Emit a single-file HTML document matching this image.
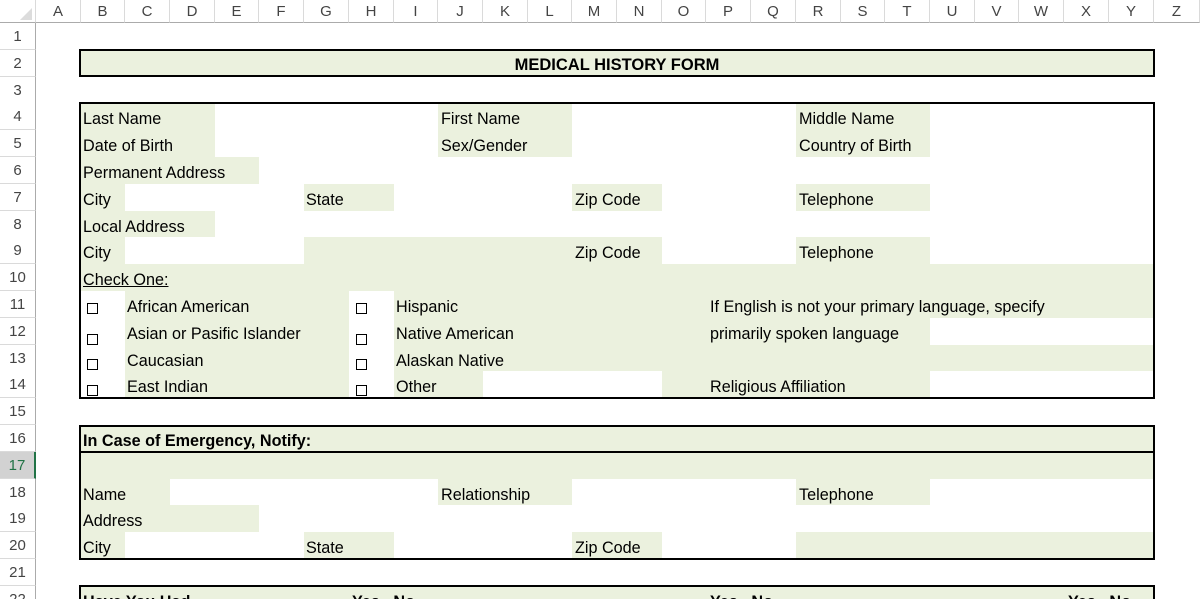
<!DOCTYPE html>
<html><head><meta charset="utf-8"><style>
*{margin:0;padding:0;box-sizing:border-box}
html,body{width:1200px;height:599px;overflow:hidden}
body{background:#fff;position:relative;font-family:"Liberation Sans",Arial,sans-serif;color:#000}
div{position:absolute}
.ch{top:0;height:23px;border-right:1px solid #dadada;border-bottom:1px solid #ababab;background:#fff;text-align:center;line-height:23px;font-size:15px;color:#444}
.rh{left:0;width:36px;border-right:1px solid #ababab;border-bottom:1px solid #dadada;text-align:center;line-height:28px;font-size:15px;color:#444;height:27px;background:#fff}
.g{background:#ebf1de}
.t{font-size:16.2px;line-height:33px;white-space:nowrap;height:27px}
.b{border:2px solid #000}
.cb{width:11px;height:11px;border:1px solid #000;background:#fff}
</style></head><body>
<div class="ch" style="left:0;width:36px;"><div style="left:20px;top:8px;width:0;height:0;border-left:12px solid transparent;border-bottom:12px solid #dcdcdc"></div></div>
<div class="ch" style="left:36px;width:45px">A</div>
<div class="ch" style="left:81px;width:44px">B</div>
<div class="ch" style="left:125px;width:45px">C</div>
<div class="ch" style="left:170px;width:45px">D</div>
<div class="ch" style="left:215px;width:44px">E</div>
<div class="ch" style="left:259px;width:45px">F</div>
<div class="ch" style="left:304px;width:45px">G</div>
<div class="ch" style="left:349px;width:45px">H</div>
<div class="ch" style="left:394px;width:44px">I</div>
<div class="ch" style="left:438px;width:45px">J</div>
<div class="ch" style="left:483px;width:45px">K</div>
<div class="ch" style="left:528px;width:44px">L</div>
<div class="ch" style="left:572px;width:45px">M</div>
<div class="ch" style="left:617px;width:45px">N</div>
<div class="ch" style="left:662px;width:44px">O</div>
<div class="ch" style="left:706px;width:45px">P</div>
<div class="ch" style="left:751px;width:45px">Q</div>
<div class="ch" style="left:796px;width:45px">R</div>
<div class="ch" style="left:841px;width:44px">S</div>
<div class="ch" style="left:885px;width:45px">T</div>
<div class="ch" style="left:930px;width:45px">U</div>
<div class="ch" style="left:975px;width:44px">V</div>
<div class="ch" style="left:1019px;width:45px">W</div>
<div class="ch" style="left:1064px;width:45px">X</div>
<div class="ch" style="left:1109px;width:45px">Y</div>
<div class="ch" style="left:1154px;width:46px">Z</div>
<div class="rh" style="top:23px">1</div>
<div class="rh" style="top:50px">2</div>
<div class="rh" style="top:77px">3</div>
<div class="rh" style="top:103px">4</div>
<div class="rh" style="top:130px">5</div>
<div class="rh" style="top:157px">6</div>
<div class="rh" style="top:184px">7</div>
<div class="rh" style="top:211px">8</div>
<div class="rh" style="top:237px">9</div>
<div class="rh" style="top:264px">10</div>
<div class="rh" style="top:291px">11</div>
<div class="rh" style="top:318px">12</div>
<div class="rh" style="top:345px">13</div>
<div class="rh" style="top:371px">14</div>
<div class="rh" style="top:398px">15</div>
<div class="rh" style="top:425px">16</div>
<div class="rh" style="top:452px;background:#d2d2d2;color:#217346;border-right:2px solid #217346">17</div>
<div class="rh" style="top:479px">18</div>
<div class="rh" style="top:505px">19</div>
<div class="rh" style="top:532px">20</div>
<div class="rh" style="top:559px">21</div>
<div class="rh" style="top:586px">22</div>

<div class="g b" style="left:79px;top:49px;width:1076px;height:28px;text-align:center;font-weight:bold;font-size:16.5px;line-height:28px">MEDICAL HISTORY FORM</div>

<div class="g" style="left:81px;top:103px;width:134px;height:54px"></div>
<div class="g" style="left:438px;top:103px;width:134px;height:54px"></div>
<div class="g" style="left:796px;top:103px;width:134px;height:54px"></div>
<div class="g" style="left:81px;top:157px;width:178px;height:27px"></div>
<div class="g" style="left:81px;top:184px;width:44px;height:27px"></div>
<div class="g" style="left:304px;top:184px;width:90px;height:27px"></div>
<div class="g" style="left:572px;top:184px;width:90px;height:27px"></div>
<div class="g" style="left:796px;top:184px;width:134px;height:27px"></div>
<div class="g" style="left:81px;top:211px;width:134px;height:26px"></div>
<div class="g" style="left:81px;top:237px;width:44px;height:27px"></div>
<div class="g" style="left:304px;top:237px;width:358px;height:27px"></div>
<div class="g" style="left:796px;top:237px;width:134px;height:27px"></div>
<div class="g" style="left:81px;top:264px;width:1073px;height:27px"></div>
<div class="g" style="left:125px;top:291px;width:224px;height:107px"></div>
<div class="g" style="left:394px;top:291px;width:760px;height:27px"></div>
<div class="g" style="left:394px;top:318px;width:536px;height:27px"></div>
<div class="g" style="left:394px;top:345px;width:760px;height:26px"></div>
<div class="g" style="left:394px;top:371px;width:89px;height:27px"></div>
<div class="g" style="left:662px;top:371px;width:268px;height:27px"></div>
<div class="b" style="left:79px;top:102px;width:1076px;height:297px"></div>

<div class="t" style="left:83px;top:103px">Last Name</div>
<div class="t" style="left:441px;top:103px">First Name</div>
<div class="t" style="left:799px;top:103px">Middle Name</div>
<div class="t" style="left:83px;top:130px">Date of Birth</div>
<div class="t" style="left:441px;top:130px">Sex/Gender</div>
<div class="t" style="left:799px;top:130px">Country of Birth</div>
<div class="t" style="left:83px;top:157px">Permanent Address</div>
<div class="t" style="left:83px;top:184px">City</div>
<div class="t" style="left:306px;top:184px">State</div>
<div class="t" style="left:575px;top:184px">Zip Code</div>
<div class="t" style="left:799px;top:184px">Telephone</div>
<div class="t" style="left:83px;top:211px">Local Address</div>
<div class="t" style="left:83px;top:237px">City</div>
<div class="t" style="left:575px;top:237px">Zip Code</div>
<div class="t" style="left:799px;top:237px">Telephone</div>
<div class="t" style="left:83px;top:264px;text-decoration:underline">Check One:</div>
<div class="t" style="left:127px;top:291px">African American</div>
<div class="t" style="left:127px;top:318px">Asian or Pasific Islander</div>
<div class="t" style="left:127px;top:345px">Caucasian</div>
<div class="t" style="left:127px;top:371px">East Indian</div>
<div class="t" style="left:396px;top:291px">Hispanic</div>
<div class="t" style="left:396px;top:318px">Native American</div>
<div class="t" style="left:396px;top:345px">Alaskan Native</div>
<div class="t" style="left:396px;top:371px">Other</div>
<div class="t" style="left:710px;top:291px">If English is not your primary language, specify</div>
<div class="t" style="left:710px;top:318px">primarily spoken language</div>
<div class="t" style="left:710px;top:371px">Religious Affiliation</div>
<div class="cb" style="left:87px;top:303px"></div>
<div class="cb" style="left:87px;top:334px"></div>
<div class="cb" style="left:87px;top:359px"></div>
<div class="cb" style="left:87px;top:385px"></div>
<div class="cb" style="left:356px;top:303px"></div>
<div class="cb" style="left:356px;top:334px"></div>
<div class="cb" style="left:356px;top:359px"></div>
<div class="cb" style="left:356px;top:385px"></div>

<div class="g" style="left:81px;top:425px;width:1073px;height:54px"></div>
<div class="g" style="left:81px;top:479px;width:89px;height:26px"></div>
<div class="g" style="left:438px;top:479px;width:134px;height:26px"></div>
<div class="g" style="left:796px;top:479px;width:134px;height:26px"></div>
<div class="g" style="left:81px;top:505px;width:178px;height:27px"></div>
<div class="g" style="left:81px;top:532px;width:44px;height:27px"></div>
<div class="g" style="left:304px;top:532px;width:90px;height:27px"></div>
<div class="g" style="left:572px;top:532px;width:90px;height:27px"></div>
<div class="g" style="left:796px;top:532px;width:358px;height:27px"></div>
<div class="b" style="left:79px;top:425px;width:1076px;height:135px"></div>
<div style="left:79px;top:451px;width:1076px;height:2px;background:#000"></div>
<div class="t" style="left:83px;top:425px;font-weight:bold">In Case of Emergency, Notify:</div>
<div class="t" style="left:83px;top:479px">Name</div>
<div class="t" style="left:441px;top:479px">Relationship</div>
<div class="t" style="left:799px;top:479px">Telephone</div>
<div class="t" style="left:83px;top:505px">Address</div>
<div class="t" style="left:83px;top:532px">City</div>
<div class="t" style="left:306px;top:532px">State</div>
<div class="t" style="left:575px;top:532px">Zip Code</div>

<div class="g b" style="left:79px;top:585px;width:1076px;height:40px"></div>
<div class="t" style="left:83px;top:586px;font-weight:bold">Have You Had</div>
<div class="t" style="left:352px;top:586px;font-weight:bold">Yes&nbsp;&nbsp;&nbsp;No</div>
<div class="t" style="left:710px;top:586px;font-weight:bold">Yes&nbsp;&nbsp;&nbsp;No</div>
<div class="t" style="left:1068px;top:586px;font-weight:bold">Yes&nbsp;&nbsp;&nbsp;No</div>
</body></html>
